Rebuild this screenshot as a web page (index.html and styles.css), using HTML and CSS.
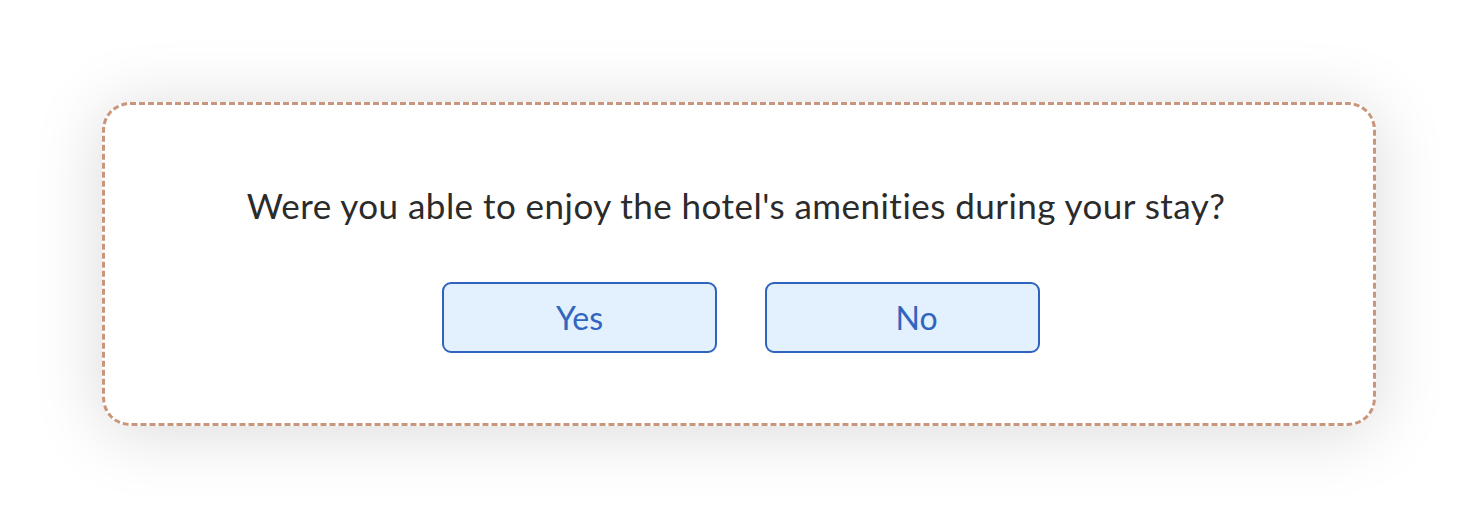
FILE: index.html
```html
<!DOCTYPE html>
<html lang="en">
<head>
<meta charset="utf-8">
<title>Stay survey</title>
<link rel="stylesheet" href="styles.css">
</head>
<body>
  <main class="stage">
    <section class="question-card">
      <h1 class="question">Were you able to enjoy the hotel's amenities during your stay?</h1>
      <div class="answers">
        <button class="answer" type="button">Yes</button>
        <button class="answer answer--no" type="button">No</button>
      </div>
    </section>
  </main>
</body>
</html>
```

FILE: styles.css
```css
* {
  box-sizing: border-box;
}

html,
body {
  margin: 0;
  background: #ffffff;
}

body {
  font-family: "Lato", "Noto Sans", sans-serif;
  font-variant-ligatures: none;
  color: #2b2b2b;
}

.stage {
  width: 1478px;
  height: 528px;
  padding: 102px;
}

.question-card {
  height: 324px;
  border: 3px dashed #c8967c;
  border-radius: 28px;
  background: #ffffff;
  box-shadow: 0 6px 70px rgba(0, 0, 0, 0.15);
  display: flex;
  flex-direction: column;
  align-items: center;
  padding-top: 78px;
}

.question {
  margin: 0 0 0 -6px;
  font-size: 35px;
  font-weight: 400;
  line-height: 44px;
  letter-spacing: 0.46px;
  color: #2b2b2b;
}

.answers {
  display: flex;
  gap: 48px;
  margin-top: 55px;
  padding-left: 4px;
}

.answer {
  width: 275px;
  height: 71px;
  border: 2px solid #2f63bf;
  border-radius: 9px;
  background: #e3f0fd;
  color: #3065c0;
  font-family: "Lato", "Noto Sans", sans-serif;
  font-variant-ligatures: none;
  font-size: 32px;
  font-weight: 400;
  padding: 0;
  cursor: pointer;
}

.answer--no {
  padding-left: 28px;
}
```
